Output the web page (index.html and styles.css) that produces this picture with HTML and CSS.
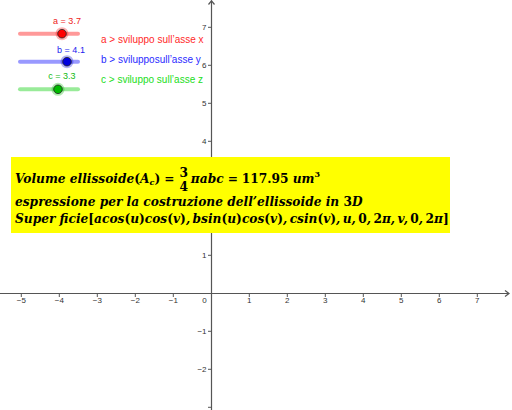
FILE: index.html
```html
<!DOCTYPE html>
<html lang="it">
<head>
<meta charset="utf-8">
<title>Ellissoide</title>
<link rel="stylesheet" href="styles.css">
</head>
<body>
<div class="stage">
  <svg class="graph" width="512" height="410" viewBox="0 0 512 410" xmlns="http://www.w3.org/2000/svg">
    <g class="axes">
      <line x1="0" y1="293.5" x2="509" y2="293.5"/>
      <line x1="211.5" y1="0.5" x2="211.5" y2="410"/>
      <polyline points="505,290.5 509,293.5 505,296.5" fill="none"/>
      <polyline points="208.5,4.5 211.5,0.8 214.5,4.5" fill="none"/>
    </g>
    <g class="ticks">
      <line x1="21.3" y1="293.5" x2="21.3" y2="297"/>
      <line x1="59.3" y1="293.5" x2="59.3" y2="297"/>
      <line x1="97.3" y1="293.5" x2="97.3" y2="297"/>
      <line x1="135.3" y1="293.5" x2="135.3" y2="297"/>
      <line x1="173.3" y1="293.5" x2="173.3" y2="297"/>
      <line x1="249.3" y1="293.5" x2="249.3" y2="297"/>
      <line x1="287.3" y1="293.5" x2="287.3" y2="297"/>
      <line x1="325.3" y1="293.5" x2="325.3" y2="297"/>
      <line x1="363.3" y1="293.5" x2="363.3" y2="297"/>
      <line x1="401.3" y1="293.5" x2="401.3" y2="297"/>
      <line x1="439.3" y1="293.5" x2="439.3" y2="297"/>
      <line x1="477.3" y1="293.5" x2="477.3" y2="297"/>
      <line x1="208" y1="27.3" x2="211.5" y2="27.3"/>
      <line x1="208" y1="65.3" x2="211.5" y2="65.3"/>
      <line x1="208" y1="103.3" x2="211.5" y2="103.3"/>
      <line x1="208" y1="141.3" x2="211.5" y2="141.3"/>
      <line x1="208" y1="255.3" x2="211.5" y2="255.3"/>
      <line x1="208" y1="331.3" x2="211.5" y2="331.3"/>
      <line x1="208" y1="369.3" x2="211.5" y2="369.3"/>
      <line x1="208" y1="407.3" x2="211.5" y2="407.3"/>
    </g>
    <g class="tick-labels xl">
      <text x="21.3" y="303">−5</text>
      <text x="59.3" y="303">−4</text>
      <text x="97.3" y="303">−3</text>
      <text x="135.3" y="303">−2</text>
      <text x="173.3" y="303">−1</text>
      <text x="204.5" y="303">0</text>
      <text x="249.3" y="303">1</text>
      <text x="287.3" y="303">2</text>
      <text x="325.3" y="303">3</text>
      <text x="363.3" y="303">4</text>
      <text x="401.3" y="303">5</text>
      <text x="439.3" y="303">6</text>
      <text x="477.3" y="303">7</text>
    </g>
    <g class="tick-labels yl">
      <text x="206.5" y="30.3">7</text>
      <text x="206.5" y="68.3">6</text>
      <text x="206.5" y="106.3">5</text>
      <text x="206.5" y="144.3">4</text>
      <text x="206.5" y="258.3">1</text>
      <text x="206.5" y="334.3">−1</text>
      <text x="206.5" y="372.3">−2</text>
    </g>
    <g class="slider red">
      <line class="track" x1="20" y1="33.7" x2="78" y2="33.7"/>
      <circle class="halo" cx="62" cy="33.7" r="6.5"/>
      <circle class="knob" cx="62" cy="33.7" r="4.3"/>
      <text class="slabel" x="67" y="24">a = 3.7</text>
    </g>
    <g class="slider blue">
      <line class="track" x1="20" y1="61.7" x2="78" y2="61.7"/>
      <circle class="halo" cx="67" cy="61.7" r="6.5"/>
      <circle class="knob" cx="67" cy="61.7" r="4.3"/>
      <text class="slabel" x="71" y="52.5">b = 4.1</text>
    </g>
    <g class="slider green">
      <line class="track" x1="20" y1="89.3" x2="78" y2="89.3"/>
      <circle class="halo" cx="58" cy="89.3" r="6.5"/>
      <circle class="knob" cx="58" cy="89.3" r="4.3"/>
      <text class="slabel" x="62" y="79.2">c = 3.3</text>
    </g>
  </svg>

  <div class="legend">
    <div class="leg leg-red">a &gt; sviluppo sull’asse x</div>
    <div class="leg leg-blue">b &gt; sviluppo​sull’asse y</div>
    <div class="leg leg-green">c &gt; sviluppo sull’asse z</div>
  </div>

  <div class="formula">
    <div class="fline fline1">Volume ellissoide<span class="up">(</span>A<span class="sub">c</span><span class="up">)</span><span class="up op">=</span><span class="frac"><span class="up">3</span><span class="up">4</span></span>πabc<span class="up op">=</span><span class="up">117.95</span> um<span class="sup up">3</span></div>
    <div class="fline">espressione per la costruzione dell’ellissoide in <span class="up">3</span>D</div>
    <div class="fline">Super ficie<span class="up">[</span>acos<span class="up">(</span>u<span class="up">)</span>cos<span class="up">(</span>v<span class="up">)</span>,&thinsp;bsin<span class="up">(</span>u<span class="up">)</span>cos<span class="up">(</span>v<span class="up">)</span>,&thinsp;csin<span class="up">(</span>v<span class="up">)</span>,&thinsp;u,&thinsp;<span class="up">0</span>,&thinsp;<span class="up">2</span>π,&thinsp;v,&thinsp;<span class="up">0</span>,&thinsp;<span class="up">2</span>π<span class="up">]</span></div>
  </div>
</div>
</body>
</html>
```

FILE: styles.css
```css
html, body {
  margin: 0;
  padding: 0;
  background: #ffffff;
}

.stage {
  position: relative;
  width: 512px;
  height: 410px;
  overflow: hidden;
  background: #ffffff;
  font-family: "Liberation Sans", Arial, sans-serif;
}

.graph {
  position: absolute;
  left: 0;
  top: 0;
  display: block;
}

.axes line,
.axes polyline {
  stroke: #555555;
  stroke-width: 1.2;
}

.ticks line {
  stroke: #555555;
  stroke-width: 1;
}

.tick-labels text {
  font-family: "Liberation Sans", Arial, sans-serif;
  font-size: 8px;
  fill: #333333;
}

.xl text {
  text-anchor: middle;
}

.yl text {
  text-anchor: end;
}

.track {
  stroke-width: 4;
  stroke-linecap: round;
  stroke-opacity: 0.4;
}

.halo {
  fill-opacity: 0.3;
  stroke: none;
}

.knob {
  stroke: #222222;
  stroke-width: 0.8;
}

.slabel {
  font-family: "Liberation Sans", Arial, sans-serif;
  font-size: 9px;
  text-anchor: middle;
}

.red .track { stroke: #ff0000; }
.red .halo, .red .knob { fill: #ff0000; }
.red .slabel { fill: #ee2222; }

.blue .track { stroke: #0000ff; }
.blue .halo, .blue .knob { fill: #0000dd; }
.blue .slabel { fill: #2222ee; }

.green .track { stroke: #00cc00; }
.green .halo, .green .knob { fill: #00bb00; }
.green .slabel { fill: #11bb11; }

.legend {
  position: absolute;
  left: 101px;
  top: 30px;
  display: flex;
  flex-direction: column;
}

.leg {
  height: 20px;
  line-height: 20px;
  font-size: 10px;
  white-space: nowrap;
}

.leg-red { color: #ff2a2a; }
.leg-blue { color: #2a2aff; }
.leg-green { color: #22dd22; }

.formula {
  position: absolute;
  left: 11px;
  top: 157px;
  width: 435px;
  height: 76px;
  padding: 0 0 0 4px;
  background: #ffff00;
  font-family: "DejaVu Serif", "Liberation Serif", serif;
  font-weight: bold;
  font-style: italic;
  font-size: 12.2px;
  color: #000000;
}

.fline {
  height: 17px;
  line-height: 17px;
  white-space: nowrap;
}

.fline1 {
  height: 34px;
  line-height: 34px;
  margin-bottom: 3px;
}

.up {
  font-style: normal;
}

.op {
  margin: 0 4px;
}

.sub {
  font-size: 8px;
  vertical-align: -2px;
}

.sup {
  font-size: 8px;
  vertical-align: 6px;
}

.frac {
  display: inline-flex;
  flex-direction: column;
  align-items: center;
  line-height: 14px;
  vertical-align: middle;
  margin: 0 3px 0 1px;
}
```
